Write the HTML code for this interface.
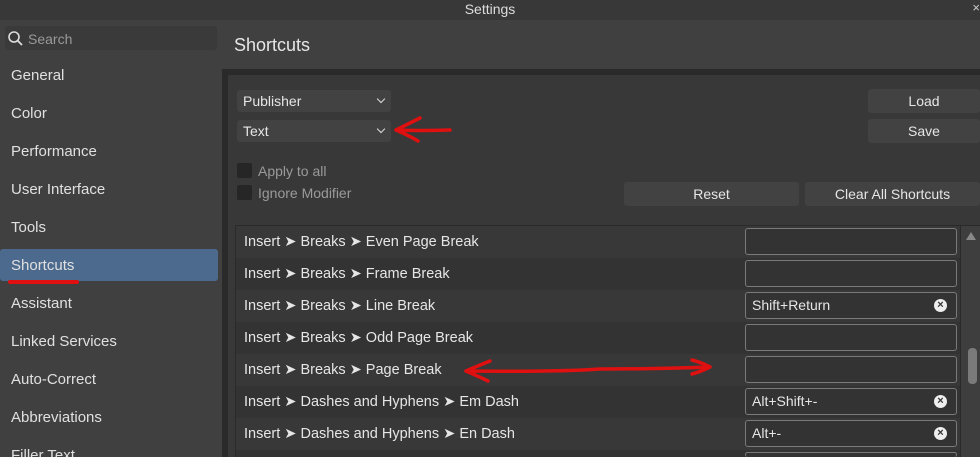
<!DOCTYPE html>
<html style="width:980px;height:457px;overflow:hidden"><head><style>
*{margin:0;padding:0;box-sizing:border-box}
body{width:980px;height:457px;overflow:hidden;background:#404040;font-family:"Liberation Sans",sans-serif;color:#e6e6e6;position:relative}
.a{position:absolute}
.title{left:0;top:0;width:980px;height:20px;background:#383838;text-align:center;font-size:14px;line-height:18px;color:#ddd}
.side{left:0;top:20px;width:222px;height:437px;background:#404040}
.search{left:5px;top:26px;width:212px;height:24px;background:#3a3a3a;border-radius:3px}
.nav{left:11px;font-size:15px;color:#e0e0e0}
.sel{left:0;top:249px;width:218px;height:32px;background:#4c6a8e;border-radius:3px}
.dark{left:222px;top:69px;width:758px;height:388px;background:#2a2a2a}
.inner{left:228px;top:75px;width:752px;height:382px;background:#383838}
.dd{left:237px;width:154px;height:22px;background:#424242;border-radius:3px;font-size:14px;line-height:22px;padding-left:6px}
.dd:after{content:"";position:absolute;right:7px;top:6px;width:5px;height:5px;border-right:1.5px solid #ddd;border-bottom:1.5px solid #ddd;transform:rotate(45deg)}
.btn{background:#424242;border-radius:3px;font-size:14px;text-align:center;line-height:24px}
.cb{left:237px;width:15px;height:15px;background:#262626;border-radius:2px}
.cl{left:258px;font-size:14px;color:#9a9a9a}
.list{left:235px;top:225px;width:745px;height:232px;background:#2a2a2a}
.row{left:236px;width:724px;height:32px;font-size:14.5px;line-height:32px;padding-left:8px}
.box{left:745px;width:212px;height:27px;background:#333;border:1px solid #7a7a7a;border-radius:3px;font-size:14px;line-height:25px;padding-left:6px}
.x{position:absolute;right:9px;top:6px;width:13px;height:13px;border-radius:50%;background:#eee;color:#333;font-size:11px;line-height:13px;text-align:center;font-weight:bold}
.sb{left:961px;top:226px;width:19px;height:231px;background:#3e3e3e}
</style></head><body>
<div class="a title">Settings</div>
<div class="a" style="right:0;top:0;font-size:13px;color:#ccc">×</div>
<div class="a side"></div>
<div class="a search"></div>
<svg class="a" style="left:7px;top:30px" width="18" height="18" viewBox="0 0 18 18"><circle cx="7" cy="7" r="5" fill="none" stroke="#ddd" stroke-width="1.6"/><line x1="10.5" y1="10.5" x2="15" y2="15" stroke="#ddd" stroke-width="1.8"/></svg>
<div class="a" style="left:28px;top:31px;font-size:14px;color:#999">Search</div>
<div class="a sel"></div>
<div class="a" style="left:8px;top:280px;width:71px;height:4px;background:#e01010;border-radius:2px"></div>
<div class="a nav" style="top:67px">General</div>
<div class="a nav" style="top:105px">Color</div>
<div class="a nav" style="top:143px">Performance</div>
<div class="a nav" style="top:181px">User Interface</div>
<div class="a nav" style="top:219px">Tools</div>
<div class="a nav" style="top:257px">Shortcuts</div>
<div class="a nav" style="top:295px">Assistant</div>
<div class="a nav" style="top:333px">Linked Services</div>
<div class="a nav" style="top:371px">Auto-Correct</div>
<div class="a nav" style="top:409px">Abbreviations</div>
<div class="a nav" style="top:447px;height:10px;overflow:hidden">Filler Text</div>
<div class="a" style="left:234px;top:35px;font-size:18px;color:#e6e6e6">Shortcuts</div>
<div class="a dark"></div>
<div class="a inner"></div>
<div class="a dd" style="top:90px">Publisher</div>
<div class="a dd" style="top:120px">Text</div>
<div class="a btn" style="left:868px;top:89px;width:112px">Load</div>
<div class="a btn" style="left:868px;top:119px;width:112px">Save</div>
<div class="a cb" style="top:163px"></div><div class="a cl" style="top:163px">Apply to all</div>
<div class="a cb" style="top:185px"></div><div class="a cl" style="top:185px">Ignore Modifier</div>
<div class="a btn" style="left:624px;top:182px;width:175px">Reset</div>
<div class="a btn" style="left:805px;top:182px;width:175px">Clear All Shortcuts</div>
<div class="a list"></div>
<div class="a row" style="top:226px;background:#383838">Insert ➤ Breaks ➤ Even Page Break</div>
<div class="a row" style="top:258px;background:#333">Insert ➤ Breaks ➤ Frame Break</div>
<div class="a row" style="top:290px;background:#383838">Insert ➤ Breaks ➤ Line Break</div>
<div class="a row" style="top:322px;background:#333">Insert ➤ Breaks ➤ Odd Page Break</div>
<div class="a row" style="top:354px;background:#383838">Insert ➤ Breaks ➤ Page Break</div>
<div class="a row" style="top:386px;background:#333">Insert ➤ Dashes and Hyphens ➤ Em Dash</div>
<div class="a row" style="top:418px;background:#383838">Insert ➤ Dashes and Hyphens ➤ En Dash</div>
<div class="a row" style="top:450px;height:7px;background:#333"></div>
<div class="a box" style="top:228px"></div>
<div class="a box" style="top:260px"></div>
<div class="a box" style="top:292px">Shift+Return<span class="x">×</span></div>
<div class="a box" style="top:324px"></div>
<div class="a box" style="top:356px"></div>
<div class="a box" style="top:388px">Alt+Shift+-<span class="x">×</span></div>
<div class="a box" style="top:420px">Alt+-<span class="x">×</span></div>
<div class="a box" style="top:452px;height:5px;border-bottom:none"></div>
<div class="a sb"></div>
<div class="a" style="left:966px;top:232px;width:0;height:0;border-left:5px solid transparent;border-right:5px solid transparent;border-bottom:8px solid #888"></div>
<div class="a" style="left:968px;top:348px;width:9px;height:36px;background:#7a7a7a;border-radius:4px"></div>
<svg class="a" style="left:0;top:0" width="980" height="457">
<path d="M396 130 Q410 123 420 118 M396 130 Q410 136 418 141 M396 130 Q420 131 450 130" stroke="#e01010" stroke-width="3.5" fill="none" stroke-linecap="round"/>
<path d="M466 371 Q480 365 490 361 M466 371 Q480 377 488 381 M466 371 Q560 372 600 369 Q660 369 710 367 M710 367 Q700 362 692 360 M710 367 Q700 372 692 374" stroke="#e01010" stroke-width="3.5" fill="none" stroke-linecap="round"/>
</svg>
</body></html>
